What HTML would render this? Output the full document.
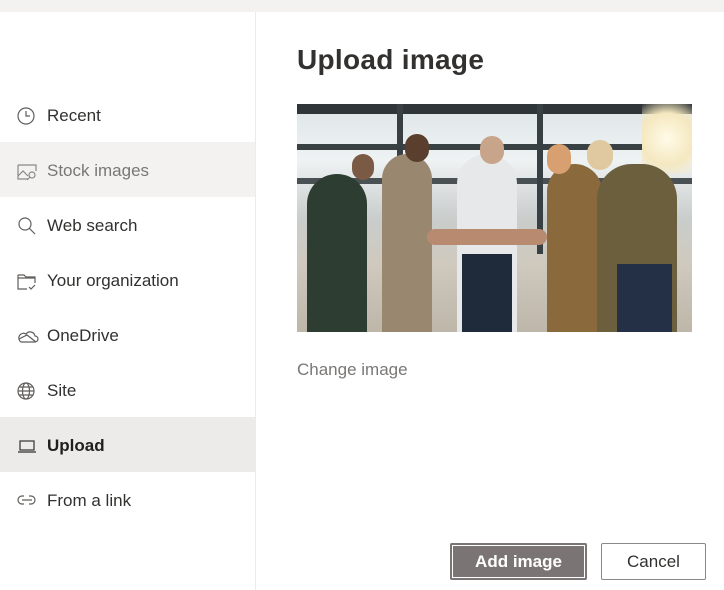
<!DOCTYPE html>
<html><head><style>
*{margin:0;padding:0;box-sizing:border-box}
body{width:724px;height:590px;background:#fff;font-family:"Liberation Sans",sans-serif;position:relative;overflow:hidden;color:#323130}
.top{position:absolute;left:0;top:0;width:724px;height:12px;background:#f3f2f1}
.side{position:absolute;left:0;top:12px;width:256px;height:578px;border-right:1px solid #edebe9}
.item{position:absolute;left:0;width:255px;height:55px;display:flex;align-items:center;font-size:17px;color:#323130}
.item svg{position:absolute;left:17px;top:20px}
.item span{position:absolute;left:47px;top:19px}
h1{position:absolute;left:297px;top:44px;font-size:28px;font-weight:600;color:#323130;letter-spacing:0.3px}
.img{position:absolute;left:297px;top:104px;width:395px;height:228px;overflow:hidden;
background:linear-gradient(180deg,#dfe6e8 0%,#eef2f3 25%,#c9cdcc 50%,#cfc9be 70%,#bdb6a9 100%)}
.img div{position:absolute}
.change{position:absolute;left:297px;top:360px;font-size:17px;color:#797775}
.btn{position:absolute;top:543px;height:37px;font-size:17px;display:flex;align-items:center;justify-content:center;border-radius:2px}
</style></head><body>
<div class="top"></div>
<div class="side">
<div class="item" style="top:75px"><svg width="20" height="20" viewBox="0 0 20 20" fill="none" stroke="#605e5c" stroke-width="1.2"><circle cx="9" cy="9" r="8"/><path d="M9 4v5h4"/></svg><span>Recent</span></div>
<div class="item" style="top:130px;background:#f3f2f1;color:#797775"><svg width="22" height="20" viewBox="0 0 22 20" fill="none" stroke="#8a8886" stroke-width="1.2"><path d="M1 3h18v6M1 3v14h10M1 14l5-5 5 5"/><circle cx="15" cy="13" r="3"/><path d="M13 15l-3 3"/></svg><span>Stock images</span></div>
<div class="item" style="top:185px"><svg width="20" height="20" viewBox="0 0 20 20" fill="none" stroke="#605e5c" stroke-width="1.2"><circle cx="8" cy="7" r="6"/><path d="M12 11l6 6"/></svg><span>Web search</span></div>
<div class="item" style="top:240px"><svg width="22" height="20" viewBox="0 0 22 20" fill="none" stroke="#605e5c" stroke-width="1.2"><path d="M1 3h6l2 2h9v6M1 3v14h9M1 6h17M12 15l2 2 4-4"/></svg><span>Your organization</span></div>
<div class="item" style="top:295px"><svg width="22" height="20" viewBox="0 0 22 20" fill="none" stroke="#605e5c" stroke-width="1.2"><path d="M4 15h14a3 3 0 0 0 0-6 5 5 0 0 0-9-2 4 4 0 0 0-5 8zM2 12l8-4 9 7"/></svg><span>OneDrive</span></div>
<div class="item" style="top:350px"><svg width="20" height="20" viewBox="0 0 20 20" fill="none" stroke="#605e5c" stroke-width="1.2"><circle cx="9" cy="9" r="8"/><ellipse cx="9" cy="9" rx="3.5" ry="8"/><path d="M1 9h16M2 5h14M2 13h14"/></svg><span>Site</span></div>
<div class="item" style="top:405px;background:#edebe9;font-weight:600;color:#201f1e"><svg width="22" height="20" viewBox="0 0 22 20" fill="none" stroke="#323130" stroke-width="1.2"><rect x="3" y="4" width="14" height="9"/><path d="M1 15h18"/></svg><span>Upload</span></div>
<div class="item" style="top:460px"><svg width="22" height="20" viewBox="0 0 22 20" fill="none" stroke="#605e5c" stroke-width="1.2"><path d="M7 4H5a4 4 0 0 0 0 8h2M12 4h2a4 4 0 0 1 0 8h-2M5 8h10"/></svg><span>From a link</span></div>
</div>
<h1>Upload image</h1>
<div class="img">
<div style="left:0;top:0;width:395px;height:10px;background:#2f3538"></div>
<div style="left:0;top:40px;width:395px;height:6px;background:#3a4144"></div>
<div style="left:0;top:74px;width:395px;height:6px;background:#4a5154"></div>
<div style="left:100px;top:0;width:6px;height:150px;background:#394043"></div>
<div style="left:240px;top:0;width:6px;height:150px;background:#394043"></div>
<div style="left:345px;top:0;width:50px;height:70px;background:radial-gradient(circle,#fffbe8,#f5e8c0 60%,transparent)"></div>
<div style="left:10px;top:70px;width:60px;height:158px;background:#2e3d32;border-radius:30px 30px 0 0"></div>
<div style="left:55px;top:50px;width:22px;height:26px;background:#7a5a44;border-radius:11px"></div>
<div style="left:85px;top:50px;width:50px;height:178px;background:#9a8770;border-radius:25px 25px 0 0"></div>
<div style="left:108px;top:30px;width:24px;height:28px;background:#5a3e2e;border-radius:12px"></div>
<div style="left:160px;top:50px;width:60px;height:178px;background:#e6e8ea;border-radius:30px 30px 0 0"></div>
<div style="left:183px;top:32px;width:24px;height:28px;background:#c8a48a;border-radius:12px"></div>
<div style="left:165px;top:150px;width:50px;height:78px;background:#1f2a3a"></div>
<div style="left:250px;top:60px;width:55px;height:168px;background:#8a6a3c;border-radius:28px 28px 0 0"></div>
<div style="left:250px;top:40px;width:24px;height:30px;background:#d8a070;border-radius:12px"></div>
<div style="left:300px;top:60px;width:80px;height:168px;background:#6b5f3e;border-radius:35px 35px 0 0"></div>
<div style="left:290px;top:36px;width:26px;height:30px;background:#e0c8a0;border-radius:13px"></div>
<div style="left:320px;top:160px;width:55px;height:68px;background:#233046"></div>
<div style="left:130px;top:125px;width:120px;height:16px;background:#b88a70;border-radius:8px"></div>
</div>
<div class="change">Change image</div>
<div class="btn" style="left:450px;width:137px;background:#7a7574;color:#fff;font-weight:600;box-shadow:inset 0 0 0 2px #7a7574,inset 0 0 0 3px #fff">Add image</div>
<div class="btn" style="left:601px;width:105px;border:1px solid #8a8886;color:#323130">Cancel</div>
</body></html>
